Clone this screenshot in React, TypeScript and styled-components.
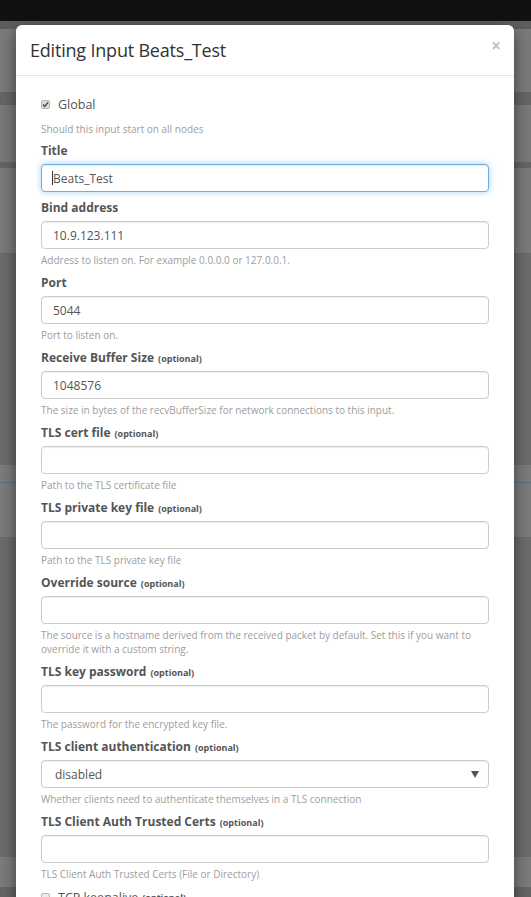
import styled, { createGlobalStyle } from "styled-components";

type Field = {
  label: string;
  optional?: boolean;
  value?: string;
  help?: string;
  kind?: "text" | "select";
  focused?: boolean;
};

const FIELDS: Field[] = [
  { label: "Title", value: "Beats_Test", focused: true },
  {
    label: "Bind address",
    value: "10.9.123.111",
    help: "Address to listen on. For example 0.0.0.0 or 127.0.0.1.",
  },
  { label: "Port", value: "5044", help: "Port to listen on." },
  {
    label: "Receive Buffer Size",
    optional: true,
    value: "1048576",
    help: "The size in bytes of the recvBufferSize for network connections to this input.",
  },
  { label: "TLS cert file", optional: true, help: "Path to the TLS certificate file" },
  { label: "TLS private key file", optional: true, help: "Path to the TLS private key file" },
  {
    label: "Override source",
    optional: true,
    help: "The source is a hostname derived from the received packet by default. Set this if you want to override it with a custom string.",
  },
  { label: "TLS key password", optional: true, help: "The password for the encrypted key file." },
  {
    label: "TLS client authentication",
    optional: true,
    kind: "select",
    value: "disabled",
    help: "Whether clients need to authenticate themselves in a TLS connection",
  },
  {
    label: "TLS Client Auth Trusted Certs",
    optional: true,
    help: "TLS Client Auth Trusted Certs (File or Directory)",
  },
];

const BANDS: { height: number; tone: string; line?: boolean }[] = [
  { height: 21, tone: "#111111" },
  { height: 8, tone: "#5e5e5e" },
  { height: 63, tone: "#7a7a7a" },
  { height: 13, tone: "#656565" },
  { height: 57, tone: "#797979" },
  { height: 6, tone: "#656565" },
  { height: 85, tone: "#7a7a7a" },
  { height: 212, tone: "#6a6c6b" },
  { height: 72, tone: "#7b7b7b", line: true },
  { height: 320, tone: "#6a6c6b" },
  { height: 30, tone: "#7b7b7b" },
  { height: 20, tone: "#666666" },
];

export default function App() {
  return (
    <Page>
      <GlobalStyle />
      <Backdrop>
        {BANDS.map((band, i) => (
          <Band key={i} $height={band.height} $tone={band.tone}>
            {band.line && <BandLine />}
          </Band>
        ))}
      </Backdrop>

      <Modal>
        <Header>
          <ModalTitle>Editing Input Beats_Test</ModalTitle>
          <Close>×</Close>
        </Header>
        <Body>
          <CheckRow>
            <CheckBox $checked>
              <CheckMark />
            </CheckBox>
            Global
          </CheckRow>
          <Help $first>Should this input start on all nodes</Help>

          {FIELDS.map((field) => (
            <Group key={field.label}>
              <Label>
                {field.label}
                {field.optional && <Optional>(optional)</Optional>}
              </Label>
              {field.kind === "select" ? (
                <SelectWrap>
                  <Select defaultValue={field.value}>
                    <option value="disabled">disabled</option>
                    <option value="optional">optional</option>
                    <option value="required">required</option>
                  </Select>
                  <Arrow viewBox="0 0 8 7">
                    <path d="M0 0 H8 L4 7 Z" fill="#555" />
                  </Arrow>
                </SelectWrap>
              ) : (
                <InputWrap>
                  <Input defaultValue={field.value ?? ""} $focused={field.focused} readOnly />
                  {field.focused && <Caret />}
                </InputWrap>
              )}
              {field.help && <Help>{field.help}</Help>}
            </Group>
          ))}

          <CheckRow>
            <CheckBox />
            TCP keepalive
            <Optional>(optional)</Optional>
          </CheckRow>
        </Body>
      </Modal>
    </Page>
  );
}

function CheckMark() {
  return (
    <svg width="7" height="7" viewBox="0 0 7 7">
      <path d="M1 3.6 L2.8 5.4 L6 1.4" stroke="#444" strokeWidth="1.4" fill="none" />
    </svg>
  );
}

const GlobalStyle = createGlobalStyle`
  html, body {
    margin: 0;
    padding: 0;
  }
  body {
    font-family: "Open Sans", "Liberation Sans", sans-serif;
    background: #6a6c6b;
  }
`;

const Page = styled.div`
  position: relative;
  height: 897px;
  overflow: hidden;
`;

const Backdrop = styled.div`
  display: flex;
  flex-direction: column;
`;

const Band = styled.div<{ $height: number; $tone: string }>`
  position: relative;
  height: ${(p) => p.$height}px;
  background: ${(p) => p.$tone};
  flex-shrink: 0;
`;

const BandLine = styled.div`
  height: 1px;
  margin-top: 17px;
  background: #4e7584;
`;

const Modal = styled.div`
  position: absolute;
  top: 25px;
  left: 16px;
  width: 498px;
  background: #fff;
  border-radius: 6px;
  box-shadow: 0 5px 15px rgba(0, 0, 0, 0.5);
`;

const Header = styled.div`
  position: relative;
  height: 50px;
  padding: 0 14px;
  border-bottom: 1px solid #e5e5e5;
  display: flex;
  align-items: center;
`;

const ModalTitle = styled.h4`
  margin: 0;
  font-size: 18px;
  font-weight: 400;
  color: #333;
  letter-spacing: -0.2px;
`;

const Close = styled.span`
  position: absolute;
  right: 13px;
  top: 9px;
  font-size: 17px;
  font-weight: 700;
  color: #c4c4c4;
`;

const Body = styled.div`
  padding: 18px 25px 0;
`;

const CheckRow = styled.div`
  display: flex;
  align-items: center;
  height: 20px;
  font-size: 12.5px;
  color: #555;
`;

const CheckBox = styled.span<{ $checked?: boolean }>`
  display: inline-flex;
  align-items: center;
  justify-content: center;
  width: 7px;
  height: 7px;
  margin-right: 8px;
  border: 1px solid #b5b5b5;
  border-radius: 2px;
  background: ${(p) => (p.$checked ? "#dcdcdc" : "#ececec")};
`;

const Group = styled.div`
  margin-bottom: 6px;
`;

const Label = styled.div`
  font-size: 12px;
  font-weight: 700;
  line-height: 20px;
  color: #555;
  margin-bottom: 3px;
`;

const Optional = styled.span`
  font-size: 9px;
  line-height: 1;
  font-weight: 700;
  margin-left: 4px;
  color: #555;
`;

const InputWrap = styled.div`
  position: relative;
`;

const Input = styled.input<{ $focused?: boolean }>`
  display: block;
  width: 100%;
  box-sizing: border-box;
  height: 28px;
  padding: 0 11px;
  font-family: inherit;
  font-size: 12px;
  color: #555;
  background: #fff;
  border: 1px solid ${(p) => (p.$focused ? "#66afe9" : "#cccccc")};
  border-radius: 4px;
  outline: none;
  box-shadow: ${(p) =>
    p.$focused
      ? "inset 0 1px 1px rgba(0,0,0,.075), 0 0 6px rgba(102,175,233,.6)"
      : "inset 0 1px 1px rgba(0,0,0,.075)"};
`;

const Caret = styled.span`
  position: absolute;
  left: 11px;
  top: 7px;
  width: 1px;
  height: 14px;
  background: #333;
`;

const SelectWrap = styled.div`
  position: relative;
`;

const Select = styled.select`
  display: block;
  width: 100%;
  height: 28px;
  box-sizing: border-box;
  padding: 0 13px;
  font-family: inherit;
  font-size: 12px;
  color: #555;
  background: #fff;
  border: 1px solid #ccc;
  border-radius: 4px;
  appearance: none;
  outline: none;
  box-shadow: inset 0 1px 1px rgba(0, 0, 0, 0.075);
`;

const Arrow = styled.svg`
  position: absolute;
  right: 10px;
  top: 11px;
  width: 8px;
  height: 7px;
  pointer-events: none;
`;

const Help = styled.div<{ $first?: boolean }>`
  margin-top: ${(p) => (p.$first ? 8 : 4)}px;
  margin-bottom: ${(p) => (p.$first ? 5 : 0)}px;
  font-size: 10px;
  line-height: 14px;
  color: #9d9d9d;
`;
